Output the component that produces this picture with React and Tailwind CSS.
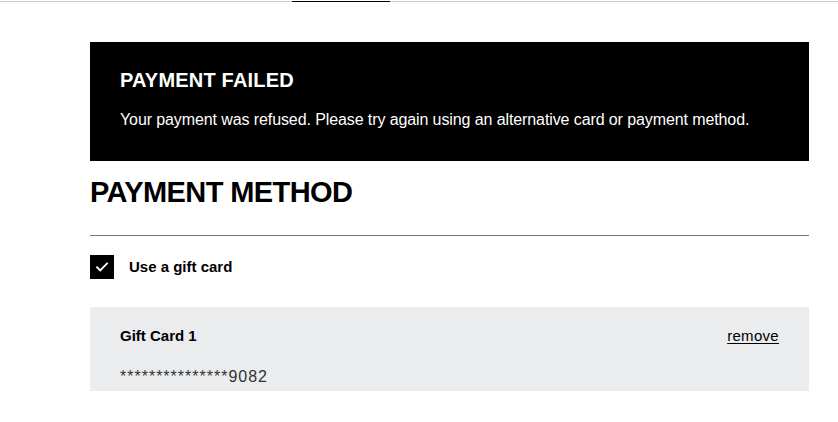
export default function App() {
    return (
        <div className="w-[838px] h-[422px] bg-white font-['Liberation_Sans',Arial,sans-serif] text-black overflow-hidden">
            {/* top tabs line */}
            <div className="flex h-[3px] pt-px">
                <div className="h-px w-[292px] bg-[#cccccc]" />
                <div className="h-px w-[98px] bg-black" />
                <div className="h-px flex-1 bg-[#cccccc]" />
            </div>

            <div className="w-[719px] ml-[90px] mt-[39px]">
                {/* error banner */}
                <div className="bg-black text-white px-[30px] pt-[26px] pb-[30px]">
                    <h3 className="text-[20px] leading-[24px] font-bold tracking-[0.2px]">PAYMENT FAILED</h3>
                    <p className="mt-[17px] text-[16px] leading-[22px] tracking-[-0.1px]">
                        Your payment was refused. Please try again using an alternative card or payment method.
                    </p>
                </div>

                <h2 className="mt-[13px] text-[29px] leading-[36px] font-bold tracking-[-0.6px]">PAYMENT METHOD</h2>

                <div className="mt-[25px] h-px bg-[#767677]" />

                <label className="mt-[19px] flex items-center gap-[15px]">
                    <span className="w-6 h-6 bg-black flex items-center justify-center">
                        <svg width="12" height="10" viewBox="0 0 12 10" fill="none">
                            <path d="M1 5.2 4.2 8.4 11 1.4" stroke="white" strokeWidth="1.8" strokeLinecap="square" />
                        </svg>
                    </span>
                    <span className="text-[15px] font-bold">Use a gift card</span>
                </label>

                {/* gift card */}
                <div className="mt-[28px] bg-[#ebecee] px-[30px] pt-[19px] pb-[3px]">
                    <div className="flex items-center justify-between">
                        <span className="text-[15px] leading-[20px] font-bold">Gift Card 1</span>
                        <a className="text-[15px] leading-[20px] underline underline-offset-2 tracking-[0.3px]">remove</a>
                    </div>
                    <div className="mt-[20px] text-[16px] leading-[22px] tracking-[1px] text-[#333]">***************9082</div>
                </div>
            </div>
        </div>
    )
}
